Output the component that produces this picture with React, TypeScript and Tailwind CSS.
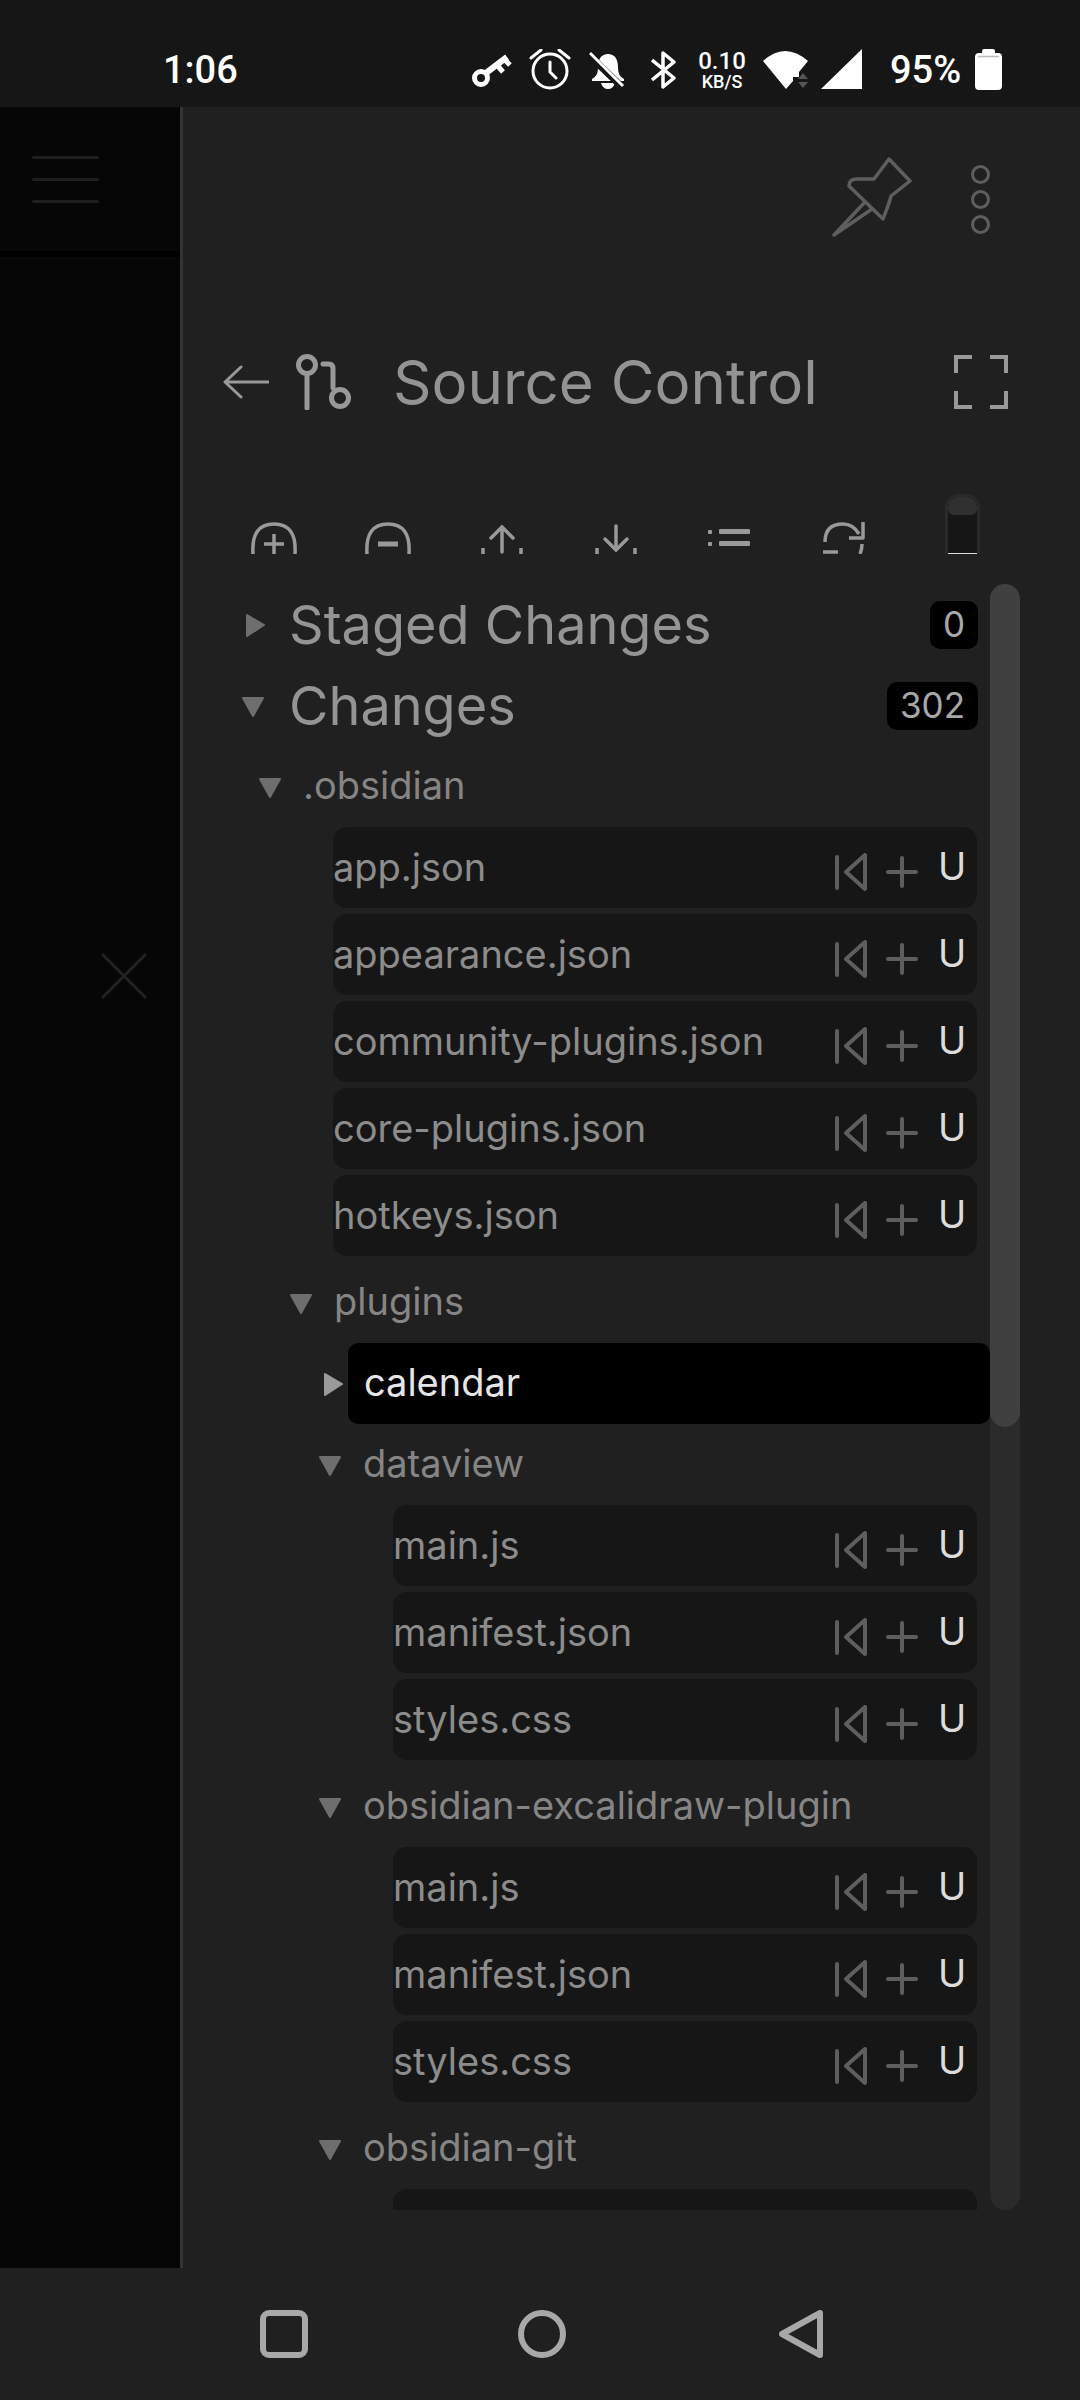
import React from 'react';

const folders = [
  { name: 'dataview', files: ['main.js', 'manifest.json', 'styles.css'] },
  { name: 'obsidian-excalidraw-plugin', files: ['main.js', 'manifest.json', 'styles.css'] },
];

const rootFiles = ['app.json', 'appearance.json', 'community-plugins.json', 'core-plugins.json', 'hotkeys.json'];

const Triangle = ({ open = true, color = '#6e6e6e' }: { open?: boolean; color?: string }) => (
  <svg width="24" height="24" viewBox="0 0 24 24" className="shrink-0">
    {open ? (
      <path d="M2 4 H22 L12 22 Z" fill={color} stroke={color} strokeWidth="2" strokeLinejoin="round" />
    ) : (
      <path d="M4 2 L21 12 L4 23 Z" fill={color} stroke={color} strokeWidth="2" strokeLinejoin="round" />
    )}
  </svg>
);

const FileRow = ({ name, left }: { name: string; left: string }) => (
  <div className={`flex h-[81px] mb-[6px] items-center rounded-[14px] bg-[#161616] ${left} mr-[13px]`}>
    <span className="text-[38px] text-[#8c8c8c] leading-none pb-[2px]">{name}</span>
    <div className="ml-auto flex items-center">
      <svg width="34" height="38" viewBox="0 0 34 38" fill="none" stroke="#5e5e5e" strokeWidth="4" strokeLinecap="round" strokeLinejoin="round" className="mt-[9px]">
        <path d="M3 4 V35" />
        <path d="M31 2 V36 L12 19 Z" />
      </svg>
      <svg width="32" height="32" viewBox="0 0 32 32" stroke="#5e5e5e" strokeWidth="4" strokeLinecap="round" className="ml-[18px] mt-[9px]">
        <path d="M16 2 V30 M2 16 H30" />
      </svg>
      <span className="ml-[20px] mr-[11px] w-[28px] text-[38px] leading-none text-[#dcdcdc] pb-[4px]">U</span>
    </div>
  </div>
);

const FolderRow = ({ name, left }: { name: string; left: string }) => (
  <div className={`flex h-[81px] items-center ${left}`}>
    <Triangle />
    <span className="ml-[21px] text-[38px] leading-none text-[#858585] pb-[3px]">{name}</span>
  </div>
);

const Badge = ({ value }: { value: string }) => (
  <span className="ml-auto mr-[12px] flex h-[48px] items-center rounded-[10px] bg-black px-[13px] text-[35px] text-[#a8a8a8]">{value}</span>
);

const StatusBar = () => (
  <div className="flex h-[107px] shrink-0 items-center bg-[#161616] text-white" style={{ fontFamily: 'Roboto, sans-serif' }}>
    <span className="ml-[163px] w-[309px] text-[38px] font-medium leading-none pt-[32px]">1:06</span>
    <svg width="40" height="36" viewBox="472 51 40 36" className="mt-[32px]" fill="none" stroke="white">
      <circle cx="481" cy="77" r="6.5" strokeWidth="5" />
      <path d="M486 72 L507 56" strokeWidth="6" />
      <path d="M497 64 L503 71 M504 58 L510 64" strokeWidth="5" />
    </svg>
    <svg width="42" height="42" viewBox="529 49 42 42" className="ml-[17px] mt-[32px]" fill="none" stroke="white" strokeWidth="3" strokeLinecap="round">
      <circle cx="550" cy="71" r="17" />
      <path d="M550 62 V72 L556 78 M531 58 L541 50 M559 50 L569 58" />
    </svg>
    <svg width="36" height="38" viewBox="589 51 36 38" className="ml-[18px] mt-[32px]">
      <path d="M592 79 Q598 76 598 68 Q598 54 608 54 Q618 54 618 68 Q618 76 624 79 V81 H592 Z M601 83 H615 Q613 89 608 89 Q603 89 601 83 Z" fill="white" />
      <path d="M590 56 L623 88" stroke="#161616" strokeWidth="7" />
      <path d="M590 53 L623 86" stroke="white" strokeWidth="3" />
    </svg>
    <svg width="26" height="38" viewBox="651 51 26 38" className="ml-[26px] mt-[32px]" fill="none" stroke="white" strokeWidth="3.5" strokeLinejoin="round">
      <path d="M652 60 L674 78 L663 87 V53 L674 62 L652 80" />
    </svg>
    <div className="ml-[21px] flex w-[48px] flex-col items-center mt-[32px]">
      <span className="text-[24px] font-medium leading-none">0.10</span>
      <span className="text-[18px] font-medium leading-none">KB/S</span>
    </div>
    <svg width="46" height="38" viewBox="761 50 46 38" className="ml-[17px] mt-[32px]">
      <path d="M761 60 Q783 40 806 60 L797 71 V76 L791 76 V80 L784 88 Z" fill="white" />
      <path d="M801 72 L806 78 H796 Z M796 81 H806 L801 87 Z" fill="#555" />
    </svg>
    <svg width="42" height="41" viewBox="819 50 42 41" className="ml-[12px] mt-[32px]">
      <path d="M860 50 V90 H819 Z" fill="white" />
    </svg>
    <span className="ml-[27px] w-[85px] text-[38px] font-medium leading-none mt-[32px]">95%</span>
    <svg width="28" height="42" viewBox="973 48 28 42" className="mt-[32px]">
      <path d="M980 52 V50 Q980 48 982 48 H991 Q993 48 993 50 V52 H996 Q1000 52 1000 56 V85 Q1000 89 996 89 H977 Q973 89 973 85 V56 Q973 52 977 52 Z" fill="white" />
      <path d="M976 55.5 H997" stroke="#bbb" strokeWidth="1.5" />
    </svg>
  </div>
);

const LeftDock = () => (
  <div className="flex w-[180px] shrink-0 flex-col bg-black">
    <div className="flex h-[144px] flex-col gap-[19px] bg-[#060606] pl-[32px] pt-[49px]">
      <div className="h-[3px] w-[67px] rounded-full bg-[#1e1e1e]" />
      <div className="h-[3px] w-[67px] rounded-full bg-[#1e1e1e]" />
      <div className="h-[3px] w-[67px] rounded-full bg-[#1e1e1e]" />
    </div>
    <div className="mt-[6px] flex-1 bg-[#060606] pt-[696px]">
      <svg width="46" height="46" viewBox="0 0 46 46" className="ml-[101px]" stroke="#222" strokeWidth="3">
        <path d="M1 1 L45 45 M45 1 L1 45" />
      </svg>
    </div>
  </div>
);

const Toolbar = () => (
  <div className="flex h-[60px] items-end pl-[68px]">
    <svg width="46" height="32" viewBox="0 0 46 32" fill="none" stroke="#999" strokeWidth="3.5">
      <path d="M2 32 Q0 2 23 2 Q46 2 44 32" />
      <path d="M23 12 V32 M13 22 H33" />
    </svg>
    <svg width="46" height="32" viewBox="0 0 46 32" fill="none" stroke="#999" strokeWidth="3.5" className="ml-[68px]">
      <path d="M2 32 Q0 2 23 2 Q46 2 44 32" />
      <path d="M13 22 H33" strokeWidth="5" />
    </svg>
    <svg width="42" height="30" viewBox="0 0 42 30" fill="none" stroke="#999" strokeWidth="3.5" className="ml-[70px]">
      <path d="M21 28 V3 M10 14 L21 3 L32 14" strokeLinecap="round" />
      <path d="M2 30 V24 M40 30 V24" />
    </svg>
    <svg width="42" height="30" viewBox="0 0 42 30" fill="none" stroke="#999" strokeWidth="3.5" className="ml-[72px]">
      <path d="M21 2 V26 M10 15 L21 26 L32 15" strokeLinecap="round" />
      <path d="M2 30 V24 M40 30 V24" />
    </svg>
    <svg width="42" height="18" viewBox="0 0 42 18" fill="#999" className="ml-[71px] mb-[7px]">
      <rect x="0" y="1" width="4" height="4" rx="1" />
      <rect x="0" y="13" width="4" height="4" rx="1" />
      <rect x="11" y="0" width="31" height="5" rx="1" />
      <rect x="11" y="12" width="31" height="5" rx="1" />
    </svg>
    <svg width="42" height="32" viewBox="0 0 42 32" fill="none" stroke="#999" strokeWidth="3.5" className="ml-[73px]">
      <path d="M2 20 Q2 2 20 2 Q30 2 36 12" />
      <path d="M40 0 V16 H26" strokeLinejoin="round" />
      <path d="M39 22 Q39 27 37 32 M0 30 H15" />
    </svg>
    <div className="ml-[80px] flex h-[60px] w-[35px] flex-col overflow-hidden rounded-t-[14px] border-x-[3px] border-t-[3px] border-[#2a2a2a] bg-[#161616]">
      <div className="h-[18px] shrink-0 rounded-b-[6px] rounded-t-[10px] bg-[#303030]" />
      <div className="mt-auto h-[1px] bg-[#dddddd]" />
    </div>
  </div>
);

export default function App() {
  return (
    <div className="flex h-[2400px] w-[1080px] flex-col overflow-hidden bg-[#202020]" style={{ fontFamily: 'Inter, sans-serif' }}>
      <StatusBar />
      <div className="flex h-[2161px] shrink-0">
        <LeftDock />
        <div className="w-[3px] shrink-0 bg-[#333]" />
        <div className="flex min-w-0 flex-1 flex-col">
          <div className="flex h-[130px] shrink-0 items-end justify-end pr-[90px]">
            <svg width="80" height="80" viewBox="833 158 80 80" fill="none" stroke="#5e5e5e" strokeWidth="3.5" strokeLinejoin="round" strokeLinecap="round">
              <path d="M890 160 L911 182 L892 197 Q890 205 884 220 L850 187 Q850 180 858 180 L875 180 Z" />
              <path d="M866 203 L835 236 L873 210" />
            </svg>
            <div className="ml-[59px] flex flex-col gap-[6px] pb-[3px]">
              <div className="h-[19px] w-[19px] rounded-full border-[3px] border-[#5e5e5e]" />
              <div className="h-[19px] w-[19px] rounded-full border-[3px] border-[#5e5e5e]" />
              <div className="h-[19px] w-[19px] rounded-full border-[3px] border-[#5e5e5e]" />
            </div>
          </div>
          <div className="mt-[117px] flex h-[56px] shrink-0 items-center pl-[40px]">
            <svg width="46" height="34" viewBox="0 0 46 34" fill="none" stroke="#999" strokeWidth="3" strokeLinecap="round" strokeLinejoin="round">
              <path d="M2 17 H46 M18 2 L2 17 L18 32" />
            </svg>
            <svg width="58" height="56" viewBox="0 0 58 56" fill="none" stroke="#999" strokeWidth="5" strokeLinecap="round" className="ml-[26px]">
              <circle cx="12" cy="11" r="8.5" />
              <path d="M12 20 V54" />
              <path d="M28 10 H34 Q38 10 38 15 V34" />
              <circle cx="45" cy="44" r="8.5" />
            </svg>
            <span className="ml-[40px] text-[60px] leading-none text-[#939393]">Source Control</span>
            <svg width="54" height="54" viewBox="0 0 54 54" fill="none" stroke="#999" strokeWidth="4" className="ml-auto mr-[72px]">
              <path d="M2 18 V2 H18 M36 2 H52 V18 M2 36 V52 H18 M36 52 H52 V36" />
            </svg>
          </div>
          <div className="mt-[84px] shrink-0">
            <Toolbar />
          </div>
          <div className="mt-[30px] flex h-[1626px] shrink-0 overflow-hidden">
            <div className="min-w-0 flex-1">
              <div className="flex h-[81px] items-center pl-[60px]">
                <Triangle open={false} />
                <span className="ml-[22px] text-[54px] leading-none text-[#949494]">Staged Changes</span>
                <Badge value="0" />
              </div>
              <div className="flex h-[81px] items-center pl-[58px]">
                <Triangle />
                <span className="ml-[24px] text-[54px] leading-none text-[#949494]">Changes</span>
                <Badge value="302" />
              </div>
              <FolderRow name=".obsidian" left="pl-[75px]" />
              {rootFiles.map((f) => (
                <FileRow key={f} name={f} left="ml-[150px]" />
              ))}
              <FolderRow name="plugins" left="pl-[106px]" />
              <div className="flex h-[81px] items-center pl-[138px]">
                <Triangle open={false} color="#9a9a9a" />
                <div className="ml-[3px] flex h-full flex-1 items-center rounded-[10px] bg-black pl-[16px]">
                  <span className="text-[38px] leading-none text-[#e6e6e6] pb-[3px]">calendar</span>
                </div>
              </div>
              {folders.map((folder) => (
                <div key={folder.name}>
                  <FolderRow name={folder.name} left="pl-[135px]" />
                  {folder.files.map((f) => (
                    <FileRow key={f} name={f} left="ml-[210px]" />
                  ))}
                </div>
              ))}
              <FolderRow name="obsidian-git" left="pl-[135px]" />
              <div className="ml-[210px] mr-[13px] h-[81px] rounded-[14px] bg-[#161616]" />
            </div>
            <div className="mr-[60px] h-full w-[30px] shrink-0 rounded-full bg-[#2a2a2a]">
              <div className="h-[843px] rounded-full bg-[#404040]" />
            </div>
          </div>
        </div>
      </div>
      <div className="flex flex-1 items-center">
        <svg width="48" height="48" viewBox="0 0 48 48" fill="none" stroke="#a8a8a8" strokeWidth="6" className="ml-[260px]">
          <rect x="3" y="3" width="42" height="42" rx="6" />
        </svg>
        <svg width="48" height="48" viewBox="0 0 48 48" fill="none" stroke="#a8a8a8" strokeWidth="6" className="ml-[210px]">
          <circle cx="24" cy="24" r="21" />
        </svg>
        <svg width="44" height="48" viewBox="0 0 44 48" fill="none" stroke="#a8a8a8" strokeWidth="6" strokeLinejoin="round" className="ml-[213px]">
          <path d="M41 3 V45 L3 24 Z" />
        </svg>
      </div>
    </div>
  );
}
